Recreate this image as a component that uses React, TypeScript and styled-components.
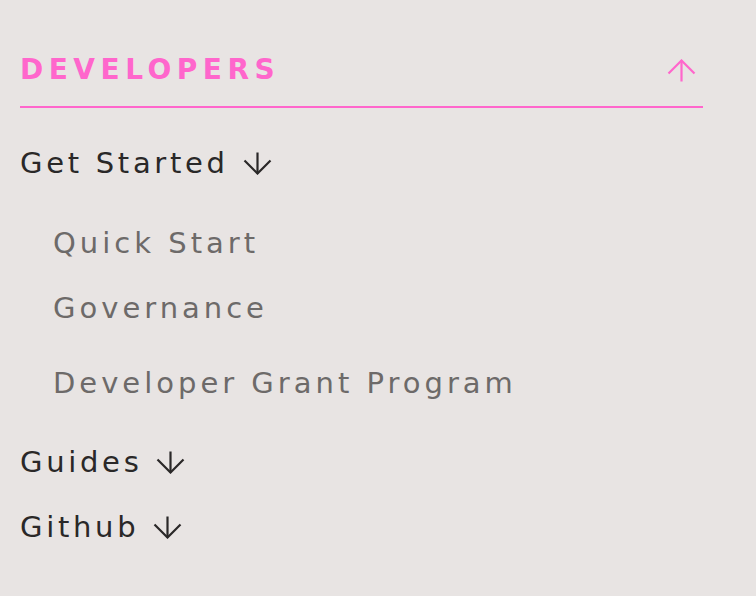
import styled, { createGlobalStyle } from "styled-components";

const GlobalStyle = createGlobalStyle`
  body {
    margin: 0;
    background: #e8e4e3;
    font-family: "DejaVu Sans", "Liberation Sans", sans-serif;
  }
`;

const Panel = styled.nav`
  width: 683px;
  padding: 52px 0 0 20px;
`;

const Header = styled.div`
  display: flex;
  justify-content: space-between;
  align-items: center;
  padding: 0 7px 18px 0;
  border-bottom: 2px solid #ff66cc;
`;

const Title = styled.span`
  color: #ff66cc;
  font-size: 28px;
  font-weight: 700;
  line-height: 36px;
  letter-spacing: 5.5px;
`;

const Group = styled.button<{ $top: number }>`
  display: flex;
  align-items: center;
  gap: 14px;
  margin-top: ${(p) => p.$top}px;
  padding: 0;
  border: 0;
  background: none;
  color: #2a2828;
  font-family: inherit;
  font-size: 29px;
  line-height: 36px;
  letter-spacing: 3.7px;
  cursor: pointer;
`;

const SubList = styled.ul`
  list-style: none;
  margin: 0;
  padding: 0 0 0 33px;
`;

const SubItem = styled.li<{ $top: number }>`
  margin-top: ${(p) => p.$top}px;
  color: #6d6a69;
  font-size: 29px;
  line-height: 36px;
  letter-spacing: 4px;
`;

function Arrow({ up, color }: { up?: boolean; color: string }) {
  return (
    <svg
      width="29"
      height="23"
      viewBox="0 0 29 23"
      fill="none"
      stroke={color}
      strokeWidth="2.2"
      style={{ transform: up ? "rotate(180deg)" : undefined, flexShrink: 0 }}
    >
      <path d="M14.5 0.5V21.5" />
      <path d="M1.5 8.5L14.5 21.5L27.5 8.5" />
    </svg>
  );
}

export default function App() {
  return (
    <>
      <GlobalStyle />
      <Panel>
        <Header>
          <Title>DEVELOPERS</Title>
          <Arrow up color="#ff66cc" />
        </Header>
        <Group $top={37}>
          Get Started <Arrow color="#2a2828" />
        </Group>
        <SubList>
          <SubItem $top={44}>Quick Start</SubItem>
          <SubItem $top={29}>Governance</SubItem>
          <SubItem $top={39}>Developer Grant Program</SubItem>
        </SubList>
        <Group $top={43}>
          Guides <Arrow color="#2a2828" />
        </Group>
        <Group $top={29}>
          Github <Arrow color="#2a2828" />
        </Group>
      </Panel>
    </>
  );
}
